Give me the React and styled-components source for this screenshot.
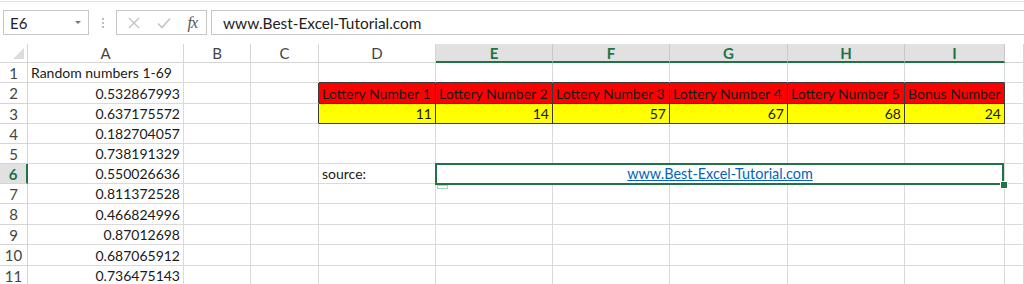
import React from 'react';
import styled, { createGlobalStyle } from 'styled-components';

const GREEN = '#217346';
const GRID = '#dadada';
const DARK = '#3a3a3a';

const numbers = [
  '0.532867993', '0.637175572', '0.182704057', '0.738191329', '0.550026636',
  '0.811372528', '0.466824996', '0.87012698', '0.687065912', '0.736475143',
];

const columns = ['A', 'B', 'C', 'D', 'E', 'F', 'G', 'H', 'I', ''];
const selectedCols = ['E', 'F', 'G', 'H', 'I'];
const lottery = [
  { label: 'Lottery Number 1', value: 11 },
  { label: 'Lottery Number 2', value: 14 },
  { label: 'Lottery Number 3', value: 57 },
  { label: 'Lottery Number 4', value: 67 },
  { label: 'Lottery Number 5', value: 68 },
  { label: 'Bonus Number', value: 24 },
];

function App() {
  return (
    <>
      <GlobalStyle />
      <Toolbar>
        <NameBox>
          E6
          <Caret />
        </NameBox>
        <Grip><i /><i /><i /></Grip>
        <FormulaButtons>
          <svg width="12" height="12" viewBox="0 0 12 12">
            <path d="M1 1 L11 11 M11 1 L1 11" stroke="#c4c4c4" strokeWidth="1.4" fill="none" />
          </svg>
          <svg width="14" height="12" viewBox="0 0 14 12">
            <path d="M1 6.5 L5 10.5 L13 1.5" stroke="#c4c4c4" strokeWidth="1.6" fill="none" />
          </svg>
          <Fx>fx</Fx>
        </FormulaButtons>
        <FormulaInput>www.Best-Excel-Tutorial.com</FormulaInput>
      </Toolbar>

      <Sheet>
        <Corner><Triangle /></Corner>
        {columns.map((c, i) => (
          <ColHeader key={i} $active={selectedCols.includes(c)}>{c}</ColHeader>
        ))}

        {/* row 1 */}
        <RowHeader>1</RowHeader>
        <Cell>Random numbers 1-69</Cell>
        <Cell />
        <Cell />
        {lottery.map((l, i) => <Cell key={i} $darkB />)}
        <Cell />

        {/* row 2 */}
        <RowHeader>2</RowHeader>
        <Cell $align="right">{numbers[0]}</Cell>
        <Cell />
        <Cell $darkR />
        {lottery.map((l, i) => (
          <Cell key={i} $fill="#ff0000" $darkR $darkB>{l.label}</Cell>
        ))}
        <Cell />

        {/* row 3 */}
        <RowHeader>3</RowHeader>
        <Cell $align="right">{numbers[1]}</Cell>
        <Cell />
        <Cell $darkR />
        {lottery.map((l, i) => (
          <Cell key={i} $fill="#ffff00" $align="right" $darkR $darkB>{l.value}</Cell>
        ))}
        <Cell />

        {[4, 5].map(r => (
          <React.Fragment key={r}>
            <RowHeader>{r}</RowHeader>
            <Cell $align="right">{numbers[r - 2]}</Cell>
            {Array.from({ length: 9 }).map((_, i) => <Cell key={i} />)}
          </React.Fragment>
        ))}

        {/* row 6 */}
        <RowHeader $active>6</RowHeader>
        <Cell $align="right">{numbers[4]}</Cell>
        <Cell />
        <Cell />
        <Cell>source:</Cell>
        <Merged>
          <Link>www.Best-Excel-Tutorial.com</Link>
          <Selection />
          <FillHandle />
          <QuickBox />
        </Merged>
        <Cell />

        {[7, 8, 9, 10, 11].map(r => (
          <React.Fragment key={r}>
            <RowHeader>{r}</RowHeader>
            <Cell $align="right">{numbers[r - 2]}</Cell>
            {Array.from({ length: 9 }).map((_, i) => <Cell key={i} />)}
          </React.Fragment>
        ))}
      </Sheet>
    </>
  );
}

const GlobalStyle = createGlobalStyle`
  html, body {
    margin: 0;
    padding: 0;
    background: #fff;
    overflow: hidden;
  }
  body {
    font-family: Lato, "Liberation Sans", sans-serif;
    color: #1f1f1f;
  }
  * { box-sizing: border-box; }
`;

const Toolbar = styled.div`
  display: flex;
  align-items: flex-start;
  height: 43px;
  margin-top: 1px;
  padding: 8px 0 0 3px;
  border-top: 1px solid #e2e2e2;
`;

const NameBox = styled.div`
  position: relative;
  display: flex;
  align-items: center;
  width: 86px;
  height: 25px;
  padding-left: 6px;
  border: 1px solid #c6c6c6;
  font-size: 15px;
  color: #222;
`;

const Caret = styled.span`
  position: absolute;
  right: 7px;
  top: 10px;
  border-left: 3px solid transparent;
  border-right: 3px solid transparent;
  border-top: 3px solid #777;
`;

const Grip = styled.div`
  display: flex;
  flex-direction: column;
  gap: 2px;
  margin: 8px 12px 0 13px;

  i {
    display: block;
    width: 2px;
    height: 2px;
    background: #bdbdbd;
  }
`;

const FormulaButtons = styled.div`
  display: flex;
  align-items: center;
  justify-content: space-between;
  width: 91px;
  height: 25px;
  padding: 0 9px 0 11px;
  border: 1px solid #c6c6c6;
`;

const Fx = styled.span`
  font-family: "Liberation Serif", serif;
  font-style: italic;
  font-size: 16px;
  color: #555;
  letter-spacing: -1px;
`;

const FormulaInput = styled.div`
  flex: 1;
  height: 25px;
  margin-left: 4px;
  margin-right: -2px;
  display: flex;
  align-items: center;
  padding-left: 11px;
  border: 1px solid #c6c6c6;
  font-size: 15.4px;
  color: #222;
`;

const Sheet = styled.div`
  display: grid;
  grid-template-columns: 28px 156px 67px 68px 117px 117px 117px 118px 117px 100px 1fr;
  grid-template-rows: 19px 20px 21px 20px 20px 20px 20px 20px 21px 20px 21px 20px;
  width: 1024px;
`;

const Corner = styled.div`
  position: relative;
  border-right: 1px solid #d5d5d5;
  border-bottom: 1px solid #d5d5d5;
`;

const Triangle = styled.div`
  position: absolute;
  right: 3px;
  bottom: 3px;
  width: 11px;
  height: 11px;
  background: #dcdcdc;
  clip-path: polygon(100% 0, 100% 100%, 0 100%);
`;

const ColHeader = styled.div`
  display: flex;
  align-items: center;
  justify-content: center;
  font-size: 15px;
  background: ${p => (p.$active ? '#e1e1e1' : '#fff')};
  color: ${p => (p.$active ? GREEN : '#444')};
  font-weight: ${p => (p.$active ? 700 : 400)};
  border-right: 1px solid ${p => (p.$active ? '#c9c9c9' : '#d5d5d5')};
  border-bottom: ${p => (p.$active ? `2px solid ${GREEN}` : '1px solid #d5d5d5')};
`;

const RowHeader = styled.div`
  display: flex;
  align-items: center;
  justify-content: center;
  font-size: 15px;
  background: ${p => (p.$active ? '#e1e1e1' : '#fff')};
  color: ${p => (p.$active ? GREEN : '#444')};
  font-weight: ${p => (p.$active ? 700 : 400)};
  border-right: ${p => (p.$active ? `2px solid ${GREEN}` : '1px solid #d5d5d5')};
  border-bottom: 1px solid #d5d5d5;
`;

const Cell = styled.div`
  display: flex;
  align-items: flex-end;
  justify-content: ${p => (p.$align === 'right' ? 'flex-end' : 'flex-start')};
  padding: 0 3px 1px;
  background: ${p => p.$fill || '#fff'};
  border-right: 1px solid ${p => (p.$darkR ? DARK : GRID)};
  border-bottom: 1px solid ${p => (p.$darkB ? DARK : GRID)};
  font-size: 14px;
  color: #1a1a1a;
  white-space: nowrap;
  overflow: visible;
`;

const Merged = styled.div`
  grid-column: 6 / 11;
  position: relative;
  display: flex;
  align-items: flex-end;
  justify-content: center;
  padding-bottom: 1px;
  border-right: 1px solid ${GRID};
  border-bottom: 1px solid ${GRID};
`;

const Link = styled.span`
  font-size: 14.4px;
  color: #0563c1;
  text-decoration: underline;
`;

const Selection = styled.div`
  position: absolute;
  top: -1px;
  left: -1px;
  right: 0;
  bottom: -2px;
  border: 2px solid ${GREEN};
  pointer-events: none;
`;

const FillHandle = styled.div`
  position: absolute;
  right: -3px;
  bottom: -5px;
  width: 6px;
  height: 6px;
  background: ${GREEN};
  outline: 1px solid #fff;
`;

const QuickBox = styled.div`
  position: absolute;
  left: 1px;
  bottom: -6px;
  width: 11px;
  height: 4px;
  border: 1px solid #a8d6bc;
`;

export default App;
